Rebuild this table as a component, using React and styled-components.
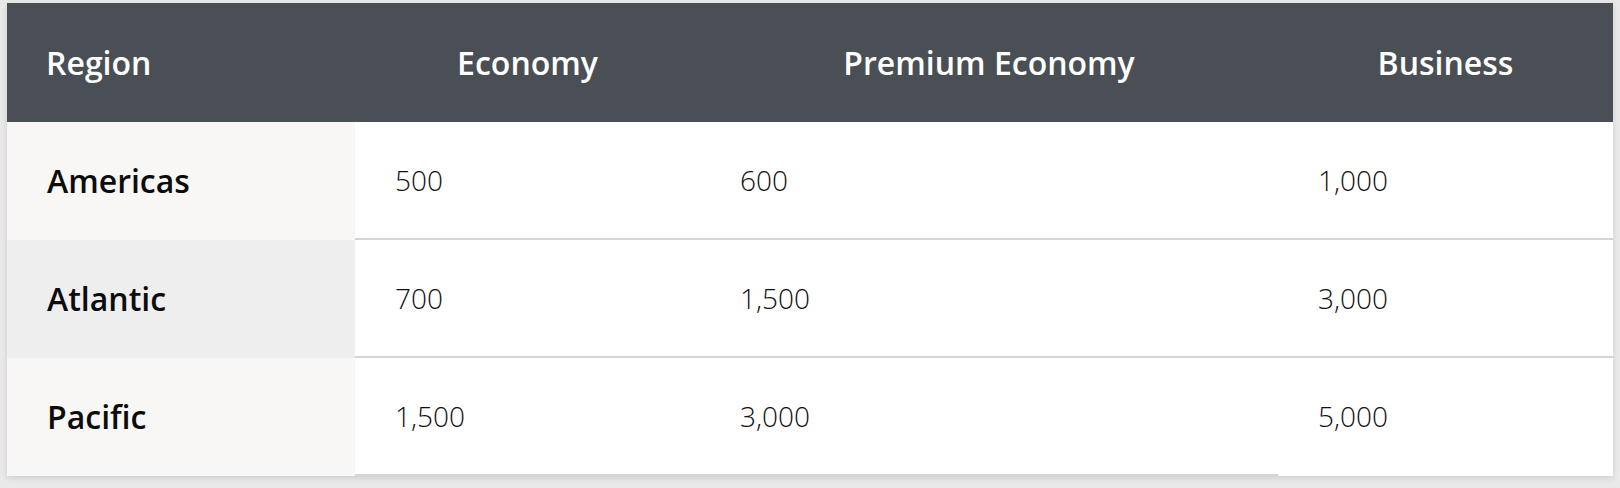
import React from "react";
import styled, { createGlobalStyle } from "styled-components";

const Global = createGlobalStyle`
  html, body {
    margin: 0;
    padding: 0;
    background: #e9e9e9;
    font-family: "Open Sans", "Liberation Sans", sans-serif;
  }
`;

const Page = styled.div`
  padding: 3px 7px 11px 7px;
`;

const Table = styled.table`
  width: 1606px;
  border-collapse: collapse;
  border-spacing: 0;
  table-layout: fixed;
  background: #ffffff;
  box-shadow: 0 2px 6px rgba(0, 0, 0, 0.12);
`;

const HeadRow = styled.tr`
  background: #4a4f56;
`;

const HeadCell = styled.th`
  width: ${(p) => p.$w}px;
  height: 119px;
  padding: 0 ${(p) => (p.$left ? "39px" : "0")};
  box-sizing: border-box;
  text-align: ${(p) => (p.$left ? "left" : "center")};
  color: #ffffff;
  font-size: 32px;
  font-weight: 600;
  vertical-align: middle;
`;

const RowHead = styled.th`
  height: 116px;
  padding: 0 0 0 40px;
  text-align: left;
  font-size: 32px;
  font-weight: 600;
  color: #0c0c0c;
  background: ${(p) => p.$bg};
  border-bottom: 2px solid ${(p) => p.$bg};
  vertical-align: middle;
`;

const Cell = styled.td`
  height: 116px;
  padding: 0 0 0 40px;
  text-align: left;
  font-size: 28px;
  font-weight: 300;
  color: #111111;
  background: #ffffff;
  border-bottom: 2px solid ${(p) => (p.$noLine ? "#ffffff" : "#d3d6d9")};
  vertical-align: middle;
`;

const columns = [
  { label: "Region", w: 348, left: true },
  { label: "Economy", w: 345 },
  { label: "Premium Economy", w: 578 },
  { label: "Business", w: 335 },
];

const rows = [
  { region: "Americas", bg: "#f8f7f5", values: ["500", "600", "1,000"] },
  { region: "Atlantic", bg: "#eeeeee", values: ["700", "1,500", "3,000"] },
  { region: "Pacific", bg: "#f8f7f5", values: ["1,500", "3,000", "5,000"] },
];

export default function App() {
  return (
    <>
      <Global />
      <Page>
        <Table>
          <thead>
            <HeadRow>
              {columns.map((c) => (
                <HeadCell key={c.label} $w={c.w} $left={c.left}>
                  {c.label}
                </HeadCell>
              ))}
            </HeadRow>
          </thead>
          <tbody>
            {rows.map((r, ri) => (
              <tr key={r.region}>
                <RowHead $bg={r.bg}>{r.region}</RowHead>
                {r.values.map((v, vi) => (
                  <Cell
                    key={vi}
                    $noLine={ri === rows.length - 1 && vi === r.values.length - 1}
                  >
                    {v}
                  </Cell>
                ))}
              </tr>
            ))}
          </tbody>
        </Table>
      </Page>
    </>
  );
}
